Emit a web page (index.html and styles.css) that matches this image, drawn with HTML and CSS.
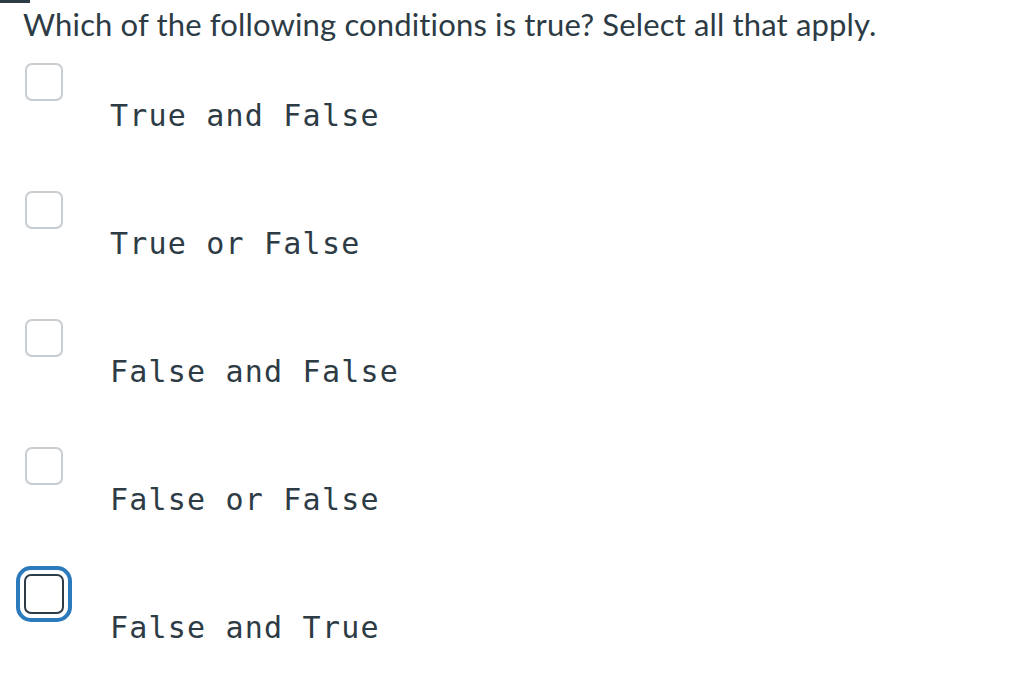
FILE: index.html
```html
<!DOCTYPE html>
<html lang="en">
<head>
<meta charset="utf-8">
<title>Question</title>
<link rel="stylesheet" href="styles.css">
</head>
<body>
<div class="topbar"></div>
<div class="question">
  <p class="prompt">Which of the following conditions is true? Select all that apply.</p>
  <ul class="answers">
    <li class="answer"><span class="box"></span><code class="label">True and False</code></li>
    <li class="answer"><span class="box"></span><code class="label">True or False</code></li>
    <li class="answer"><span class="box"></span><code class="label">False and False</code></li>
    <li class="answer"><span class="box"></span><code class="label">False or False</code></li>
    <li class="answer"><span class="box box-focus"></span><code class="label">False and True</code></li>
  </ul>
</div>
</body>
</html>
```

FILE: styles.css
```css
html, body {
  margin: 0;
  padding: 0;
  background: #ffffff;
  color: #2d3b45;
}

.topbar {
  width: 30px;
  height: 3px;
  background: #2d3b45;
}

.question {
  padding-left: 23px;
}

.prompt {
  margin: 3px 0 0 0;
  font-family: Lato, "Open Sans", sans-serif;
  font-size: 31px;
  line-height: 36px;
  letter-spacing: 0.15px;
}

.answers {
  list-style: none;
  margin: 21px 0 0 0;
  padding: 0;
}

.answer {
  display: flex;
  align-items: flex-start;
  height: 128px;
}

.box {
  box-sizing: border-box;
  flex: none;
  width: 38px;
  height: 38px;
  margin-left: 2px;
  border: 2px solid #c7cdd1;
  border-radius: 7px;
  background: #ffffff;
}

.box-focus {
  width: 40px;
  height: 40px;
  margin: -1px -1px 0 1px;
  border-color: #2d3b45;
  outline: 4px solid #2b7abc;
  outline-offset: 4px;
  border-radius: 7px;
}

.label {
  margin: 35px 0 0 47px;
  font-family: "DejaVu Sans Mono", "Liberation Mono", monospace;
  font-size: 30px;
  line-height: 36px;
  letter-spacing: 1.2px;
  color: #2d3b45;
}
```
